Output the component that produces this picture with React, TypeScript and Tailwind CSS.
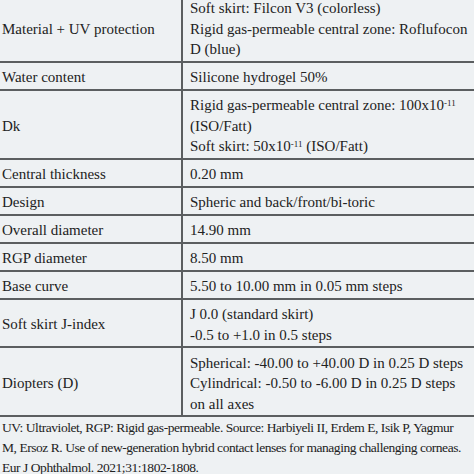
const rows: { label: string; value: React.ReactNode[] }[] = [
  {
    label: 'Material + UV protection',
    value: ['Soft skirt: Filcon V3 (colorless)', 'Rigid gas-permeable central zone: Roflufocon', 'D (blue)'],
  },
  { label: 'Water content', value: ['Silicone hydrogel 50%'] },
  {
    label: 'Dk',
    value: [
      <>Rigid gas-permeable central zone: 100x10<sup className="text-[9px]">-11</sup></>,
      '(ISO/Fatt)',
      <>Soft skirt: 50x10<sup className="text-[9px]">-11</sup> (ISO/Fatt)</>,
    ],
  },
  { label: 'Central thickness', value: ['0.20 mm'] },
  { label: 'Design', value: ['Spheric and back/front/bi-toric'] },
  { label: 'Overall diameter', value: ['14.90 mm'] },
  { label: 'RGP diameter', value: ['8.50 mm'] },
  { label: 'Base curve', value: ['5.50 to 10.00 mm in 0.05 mm steps'] },
  { label: 'Soft skirt J-index', value: ['J 0.0 (standard skirt)', '-0.5 to +1.0 in 0.5 steps'] },
  {
    label: 'Diopters (D)',
    value: [
      'Spherical: -40.00 to +40.00 D in 0.25 D steps',
      'Cylindrical: -0.50 to -6.00 D in 0.25 D steps',
      'on all axes',
    ],
  },
];

const footer = [
  'UV: Ultraviolet, RGP: Rigid gas-permeable. Source: Harbiyeli II, Erdem E, Isik P, Yagmur',
  'M, Ersoz R. Use of new-generation hybrid contact lenses for managing challenging corneas.',
  'Eur J Ophthalmol. 2021;31:1802-1808.',
];

export default function App() {
  return (
    <div className="w-[474px] h-[474px] overflow-hidden bg-[#eef1f3] text-[#222] font-['Liberation_Serif',serif]">
      <table className="w-full border-collapse mt-[-6.5px] text-[15px] leading-[20.5px]">
        <tbody>
          {rows.map((r) => (
            <tr key={r.label} className="border-b-2 border-[#5b5e60]">
              <td className="w-[182px] border-r-2 border-[#5b5e60] pl-[2px] pt-[4.5px] pb-[1px] align-middle">
                {r.label}
              </td>
              <td className="pl-[7px] pt-[4.5px] pb-[1px] align-middle">
                {r.value.map((v, i) => (
                  <div key={i} className="whitespace-nowrap">{v}</div>
                ))}
              </td>
            </tr>
          ))}
        </tbody>
      </table>
      <div className="pl-[2px] pt-[1px] text-[13.5px] leading-[20px] tracking-[-0.45px]">
        {footer.map((l) => (
          <div key={l} className="whitespace-nowrap">{l}</div>
        ))}
      </div>
    </div>
  );
}
